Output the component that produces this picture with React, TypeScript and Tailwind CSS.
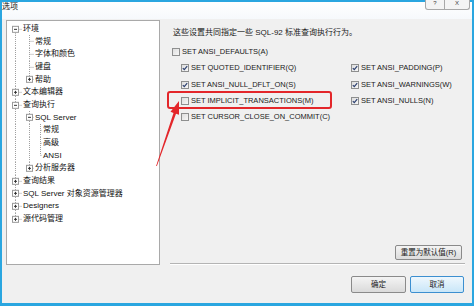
import React from "react";

type Row = { label: string; level: number; exp?: "+" | "-"; guides: string };

const tree: Row[] = [
  { label: "环境", level: 0, exp: "-", guides: "b" },
  { label: "常规", level: 1, guides: "ff" },
  { label: "字体和颜色", level: 1, guides: "ff" },
  { label: "键盘", level: 1, guides: "ff" },
  { label: "帮助", level: 1, exp: "+", guides: "ft" },
  { label: "文本编辑器", level: 0, exp: "+", guides: "f" },
  { label: "查询执行", level: 0, exp: "-", guides: "f" },
  { label: "SQL Server", level: 1, exp: "-", guides: "ff" },
  { label: "常规", level: 2, guides: "fff" },
  { label: "高级", level: 2, guides: "fff" },
  { label: "ANSI", level: 2, guides: "fft" },
  { label: "分析服务器", level: 1, exp: "+", guides: "ft" },
  { label: "查询结果", level: 0, exp: "+", guides: "f" },
  { label: "SQL Server 对象资源管理器", level: 0, exp: "+", guides: "f" },
  { label: "Designers", level: 0, exp: "+", guides: "f" },
  { label: "源代码管理", level: 0, exp: "+", guides: "t" },
];

const lineX = [8.5, 22.5, 33.5];
const textX = [16, 28, 36];
const ROW_H = 12.67;

const TreeRow = ({ row }: { row: Row }) => {
  const c = ROW_H / 2;
  const lx = lineX[row.level];
  return (
    <div className="flex h-[12.67px] items-center">
      <svg width={textX[row.level]} height={ROW_H} className="shrink-0">
        {row.guides.split("").map((g, i) => {
          const y1 = g === "b" ? c : 0;
          const y2 = g === "t" ? c : ROW_H;
          return (
            <line
              key={i}
              x1={lineX[i]}
              x2={lineX[i]}
              y1={y1}
              y2={y2}
              stroke="#a0a0a0"
              strokeDasharray="1 1"
            />
          );
        })}
        <line
          x1={lx}
          x2={textX[row.level] - 1}
          y1={c}
          y2={c}
          stroke="#a0a0a0"
          strokeDasharray="1 1"
        />
        {row.exp && (
          <g>
            <rect x={lx - 3} y={c - 3} width={6} height={6} fill="#fff" stroke="#9a9a9a" />
            <line x1={lx - 1.5} x2={lx + 1.5} y1={c} y2={c} stroke="#333" />
            {row.exp === "+" && (
              <line x1={lx} x2={lx} y1={c - 1.5} y2={c + 1.5} stroke="#333" />
            )}
          </g>
        )}
      </svg>
      <span className="whitespace-nowrap leading-[10px]">{row.label}</span>
    </div>
  );
};

const Check = ({ label, checked }: { label: string; checked?: boolean }) => (
  <div className="flex h-[16.25px] items-center">
    <span className="flex h-[8px] w-[8px] shrink-0 items-center justify-center border border-[#8e8f8f] bg-linear-to-br from-[#dedede] to-[#f7f7f7]">
      {checked && (
        <svg width="6" height="6" viewBox="0 0 6 6">
          <path d="M0.8 3.1 L2.3 4.6 L5.2 1.2" fill="none" stroke="#2d4070" strokeWidth="1.2" />
        </svg>
      )}
    </span>
    <span className="ml-[2px] whitespace-nowrap text-[7.5px] leading-[10px] text-[#202020]">
      {label}
    </span>
  </div>
);

export default function App() {
  return (
    <div className="relative h-[306px] w-[474px] overflow-hidden bg-[#2aa6e0] pb-[3px] pl-[2px] pr-[2px] pt-[2px] font-['Liberation_Sans','Noto_Sans_CJK_SC',sans-serif] text-[8px] text-[#111]">
      <div className="flex h-full flex-col bg-[#f0f0f0]">
        {/* title bar */}
        <div className="flex h-[17px] bg-linear-to-b from-white to-[#f6f9fc]">
          <span className="leading-[9px]">选项</span>
          <div className="ml-auto mr-[2px] -mt-[2px] flex h-[10px]">
            <div className="flex w-[20px] items-start justify-center rounded-bl-[3px] border border-t-0 border-[#a8a8a8] bg-[#f4f4f4] text-[6px] leading-[7px] text-[#444]">
              ?
            </div>
            <div className="flex w-[25px] items-start justify-center rounded-br-[3px] border border-l-0 border-t-0 border-[#a8a8a8] bg-[#f4f4f4] text-[6px] leading-[7px] text-[#444]">
              X
            </div>
          </div>
        </div>

        {/* content */}
        <div className="flex h-[246px]">
          <div className="ml-[4px] mt-[1px] h-[245px] w-[154px] border border-[#a9a9a9] bg-white pt-[1.7px]">
            {tree.map((r, i) => (
              <TreeRow key={i} row={r} />
            ))}
          </div>

          <div className="flex flex-1 flex-col">
            <div className="ml-[13px] mt-[9px] whitespace-nowrap leading-[10px] text-[#202020]">
              这些设置共同指定一些 SQL-92 标准查询执行行为。
            </div>
            <div className="mt-[6px] pl-[12px]">
              <Check label="SET ANSI_DEFAULTS(A)" />
            </div>
            <div className="flex">
              <div className="w-[191px] pl-[21px]">
                <Check label="SET QUOTED_IDENTIFIER(Q)" checked />
                <Check label="SET ANSI_NULL_DFLT_ON(S)" checked />
                <Check label="SET IMPLICIT_TRANSACTIONS(M)" />
                <Check label="SET CURSOR_CLOSE_ON_COMMIT(C)" />
              </div>
              <div>
                <Check label="SET ANSI_PADDING(P)" checked />
                <Check label="SET ANSI_WARNINGS(W)" checked />
                <Check label="SET ANSI_NULLS(N)" checked />
              </div>
            </div>
            <div className="flex-1" />
            <button className="mr-[10px] flex h-[15px] w-[67px] items-center justify-center self-end rounded-[2px] border border-[#8a8a8a] bg-linear-to-b from-[#f4f4f4] to-[#dcdcdc] text-[7.5px] leading-[10px] text-[#222]">
              重置为默认值(R)
            </button>
            <div className="ml-[10px] mr-[7px] mt-[3px] h-[2px] border-b border-t border-b-white border-t-[#b4b4b4]" />
          </div>
        </div>

        {/* footer */}
        <div className="flex flex-1 justify-end gap-[4px] pr-[8px] pt-[11px]">
          <button className="flex h-[17px] w-[55px] items-center justify-center rounded-[2px] border border-[#8a8a8a] bg-linear-to-b from-[#f4f4f4] to-[#dadada] text-[7.5px] text-[#222]">
            确定
          </button>
          <button className="flex h-[17px] w-[54px] items-center justify-center rounded-[2px] border border-[#3c8fd0] bg-linear-to-b from-[#eef7fd] to-[#c9e6f8] text-[7.5px] text-[#222]">
            取消
          </button>
        </div>
      </div>

      {/* annotation: red highlight and arrow */}
      <div className="absolute left-[167px] top-[91px] h-[18px] w-[165px] rounded-[3px] border-2 border-[#e3262a]" />
      <svg className="pointer-events-none absolute left-0 top-0" width="474" height="306">
        <polygon
          points="156.1,165.9 173.5,112.9 170.5,111.8 179,101 179,114.8 176,113.7 156.9,166.1"
          fill="#e3262a"
        />
      </svg>
    </div>
  );
}
